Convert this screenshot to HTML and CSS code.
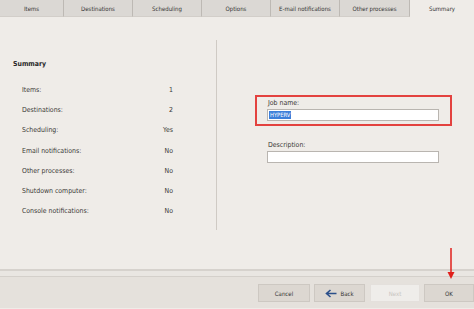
FILE: index.html
```html
<!DOCTYPE html>
<html lang="en">
<head>
    <meta charset="UTF-8">
    <title>Backup job - Summary</title>
    <link rel="stylesheet" href="styles.css">
</head>
<body>
    <div class="tabs">
        <div class="tab tab-items">Items</div>
        <div class="tab">Destinations</div>
        <div class="tab">Scheduling</div>
        <div class="tab">Options</div>
        <div class="tab">E-mail notifications</div>
        <div class="tab tab-other">Other processes</div>
        <div class="tab active">Summary</div>
    </div>

    <div class="content">
        <div class="summary">
            <div class="summary-title">Summary</div>
            <div class="row"><span>Items:</span><span>1</span></div>
            <div class="row"><span>Destinations:</span><span>2</span></div>
            <div class="row"><span>Scheduling:</span><span>Yes</span></div>
            <div class="row"><span>Email notifications:</span><span>No</span></div>
            <div class="row"><span>Other processes:</span><span>No</span></div>
            <div class="row"><span>Shutdown computer:</span><span>No</span></div>
            <div class="row"><span>Console notifications:</span><span>No</span></div>
        </div>

        <div class="details">
            <div class="field highlight">
                <div class="label">Job name:</div>
                <div class="textbox"><span class="selected">HYPERV</span></div>
            </div>
            <div class="field description">
                <div class="label">Description:</div>
                <div class="textbox"></div>
            </div>
        </div>
    </div>

    <div class="separator"></div>

    <div class="footer">
        <div class="btn btn-cancel">Cancel</div>
        <div class="btn btn-back">
            <svg class="back-arrow" width="12" height="9" viewBox="0 0 12 9">
                <path d="M11.5 4.5H2.5M5.5 1L1.5 4.5L5.5 8" fill="none" stroke="#2b4f8a" stroke-width="1.6"/>
            </svg>
            Back
        </div>
        <div class="btn btn-next disabled">Next</div>
        <div class="btn btn-ok">OK</div>
    </div>

    <div class="red-arrow">
        <svg width="8" height="32" viewBox="0 0 8 32">
            <path d="M4 0V25" stroke="#e0201c" stroke-width="1.5"/>
            <path d="M0.5 24L4 31L7.5 24Z" fill="#e0201c"/>
        </svg>
    </div>
</body>
</html>
```

FILE: styles.css
```css
html, body {
    margin: 0;
    padding: 0;
}
body {
    width: 474px;
    height: 309px;
    overflow: hidden;
    background-color: #efece8;
    font-family: "DejaVu Sans Condensed", "DejaVu Sans", sans-serif;
    font-stretch: condensed;
    font-size: 6.9px;
    color: #3a3836;
    position: relative;
}
.tabs {
    display: flex;
    height: 17px;
}
.tab {
    width: 68px;
    height: 16px;
    background-color: #dbd8d4;
    border-right: 1px solid #bdb9b4;
    border-bottom: 1px solid #d2cec9;
    display: flex;
    align-items: center;
    justify-content: center;
    font-size: 6px;
    color: #333333;
}
.tab-items {
    width: 63px;
}
.tab-other {
    width: 69px;
}
.tab.active {
    width: 64px;
    background-color: #efece8;
    border-right: none;
    border-bottom: 1px solid #efece8;
}
.content {
    display: flex;
    align-items: flex-start;
    height: 252px;
}
.summary {
    width: 216px;
    height: 172px;
    margin-top: 23px;
    padding-top: 18px;
    border-right: 1px solid #cfcac4;
    display: flex;
    flex-direction: column;
}
.summary-title {
    margin-left: 13px;
    height: 12px;
    line-height: 12px;
    font-weight: bold;
    color: #262626;
    margin-bottom: 10px;
}
.row {
    display: flex;
    justify-content: space-between;
    width: 151px;
    margin-left: 22px;
    height: 20.2px;
    line-height: 20.2px;
}
.details {
    display: flex;
    flex-direction: column;
    padding-left: 38px;
    padding-top: 78px;
}
.field {
    display: flex;
    flex-direction: column;
}
.highlight {
    width: 183px;
    border: 2px solid #e3423f;
    padding: 1px 0 3px 10px;
}
.description {
    margin-left: 12px;
    margin-top: 14px;
}
.label {
    height: 10px;
    line-height: 10px;
    margin-left: 1px;
    margin-bottom: 1px;
    color: #363432;
}
.textbox {
    width: 169px;
    height: 10px;
    background-color: #ffffff;
    border: 1px solid #b9b5b0;
    display: flex;
    align-items: center;
    padding-left: 1px;
}
.selected {
    background-color: #3d7fd9;
    color: #ffffff;
    font-size: 5.8px;
    height: 8px;
    line-height: 8px;
    padding: 0 1px;
}
.separator {
    height: 2px;
    background-color: #d6d2cd;
    border-bottom: 5px solid #e9e6e2;
}
.footer {
    height: 32px;
    border-top: 1px solid #d4d0cb;
    background-color: #e5e1dc;
    display: flex;
    justify-content: flex-end;
    align-items: flex-start;
    padding-top: 7px;
    box-sizing: border-box;
}
.btn {
    height: 18px;
    background-color: #dcd7d1;
    border: 1px solid #cdc8c2;
    box-sizing: border-box;
    display: flex;
    align-items: center;
    justify-content: center;
    gap: 3px;
    margin-left: 4px;
    font-size: 6px;
    color: #333333;
}
.btn-cancel {
    width: 52px;
}
.btn-back {
    width: 51px;
}
.btn-next {
    width: 50px;
    margin-left: 5px;
}
.btn-ok {
    width: 50px;
}
.btn.disabled {
    background-color: #efedea;
    border-color: #e4e0dc;
    color: #c8c4c0;
}
.red-arrow {
    position: absolute;
    left: 447px;
    top: 248px;
    line-height: 0;
}
```
